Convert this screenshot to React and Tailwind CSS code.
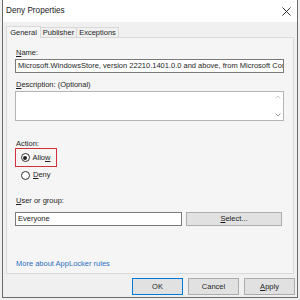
import React from 'react';

const font = { fontFamily: '"Liberation Sans", Arial, sans-serif' };

function Radio({ checked }) {
  return (
    <span className="w-[9px] h-[9px] rounded-full border border-[#333] bg-white flex items-center justify-center shrink-0">
      {checked && <span className="w-[4px] h-[4px] rounded-full bg-[#222]" />}
    </span>
  );
}

export default function App() {
  return (
    <div className="w-[300px] h-[300px] bg-[#f0f0f0] pl-[2px] overflow-hidden" style={font}>
      <div className="w-[296px] h-[298px] bg-[#f0f0f0] border border-t-0 border-[#6b6b6b] flex flex-col text-[7.5px] text-[#1e1e1e]">
        {/* Title bar */}
        <div className="h-[22px] bg-white flex items-center justify-between pl-[3px] pr-[6px] shrink-0">
          <span className="text-[8.2px] text-[#222]">Deny Properties</span>
          <svg width="9" height="9" viewBox="0 0 9 9">
            <path d="M0.5 0.5 L8.5 8.5 M8.5 0.5 L0.5 8.5" stroke="#333" strokeWidth="1" />
          </svg>
        </div>

        {/* Tabs */}
        <div className="flex items-end pl-[3px] h-[15px] shrink-0">
          <div className="w-[35px] h-[12px] bg-[#f5f5f5] border border-b-0 border-[#d9d9d9] flex items-center justify-center relative top-[1px] z-10">General</div>
          <div className="w-[36px] h-[10px] border-t border-r border-[#d9d9d9] flex items-center justify-center">Publisher</div>
          <div className="w-[42px] h-[10px] border-t border-r border-[#d9d9d9] flex items-center justify-center">Exceptions</div>
        </div>

        {/* Panel */}
        <div className="ml-[3px] w-[288px] h-[237px] border border-[#d9d9d9] bg-[#f5f5f5] pl-[8px] pt-[9px] flex flex-col shrink-0">
          <div className="h-[11px] leading-[11px] pl-[1px]"><span className="underline">N</span>ame:</div>
          <div className="mt-[1px] w-[269px] h-[14px] bg-white border border-[#7a7a7a] px-[2px] flex items-center overflow-hidden whitespace-nowrap">
            Microsoft.WindowsStore, version 22210.1401.0.0 and above, from Microsoft Corp
          </div>
          <div className="mt-[6px] h-[11px] leading-[11px] pl-[1px]"><span className="underline">D</span>escription: (Optional)</div>
          <div className="mt-[1px] w-[269px] h-[30px] bg-white border border-[#b4b4b4] flex justify-end">
            <div className="w-[10px] flex flex-col items-center justify-between pt-[3px] pb-[3px]">
              <svg width="6" height="4" viewBox="0 0 6 4"><path d="M0.5 3.5 L3 1 L5.5 3.5" stroke="#cfcfcf" fill="none" /></svg>
              <svg width="6" height="4" viewBox="0 0 6 4"><path d="M0.5 0.5 L3 3 L5.5 0.5" stroke="#9a9a9a" fill="none" /></svg>
            </div>
          </div>
          <div className="mt-[18px] h-[10px] leading-[10px] pl-[1px]">Action:</div>
          <div className="mt-[-1px] w-[42px] h-[19px] border-[1.5px] border-[#d0303a] flex items-center gap-[3px] pl-[4.5px]">
            <Radio checked />
            <span>Allo<span className="underline">w</span></span>
          </div>
          <div className="mt-[2px] h-[12px] flex items-center gap-[3px] pl-[6px]">
            <Radio />
            <span><span className="underline">D</span>eny</span>
          </div>
          <div className="mt-[14px] h-[11px] leading-[11px] pl-[1px]"><span className="underline">U</span>ser or group:</div>
          <div className="mt-[6px] flex gap-[4px]">
            <div className="w-[167px] h-[14px] bg-white border border-[#7a7a7a] px-[2px] flex items-center">Everyone</div>
            <div className="w-[96px] h-[14px] bg-[#e1e1e1] border border-[#adadad] flex items-center justify-center">
              <span><span className="underline">S</span>elect...</span>
            </div>
          </div>
          <div className="mt-[32px] h-[11px] leading-[11px] pl-[1px] text-[#2a70c2]">More about AppLocker rules</div>
        </div>

        {/* Buttons */}
        <div className="flex justify-end gap-[5px] pr-[2px] mt-[4px]">
          <div className="w-[51px] h-[17px] bg-[#e1e1e1] border border-[#0078d7] flex items-center justify-center">OK</div>
          <div className="w-[51px] h-[17px] bg-[#e1e1e1] border border-[#adadad] flex items-center justify-center">Cancel</div>
          <div className="w-[51px] h-[17px] bg-[#e1e1e1] border border-[#adadad] flex items-center justify-center"><span><span className="underline">A</span>pply</span></div>
        </div>
      </div>
    </div>
  );
}
